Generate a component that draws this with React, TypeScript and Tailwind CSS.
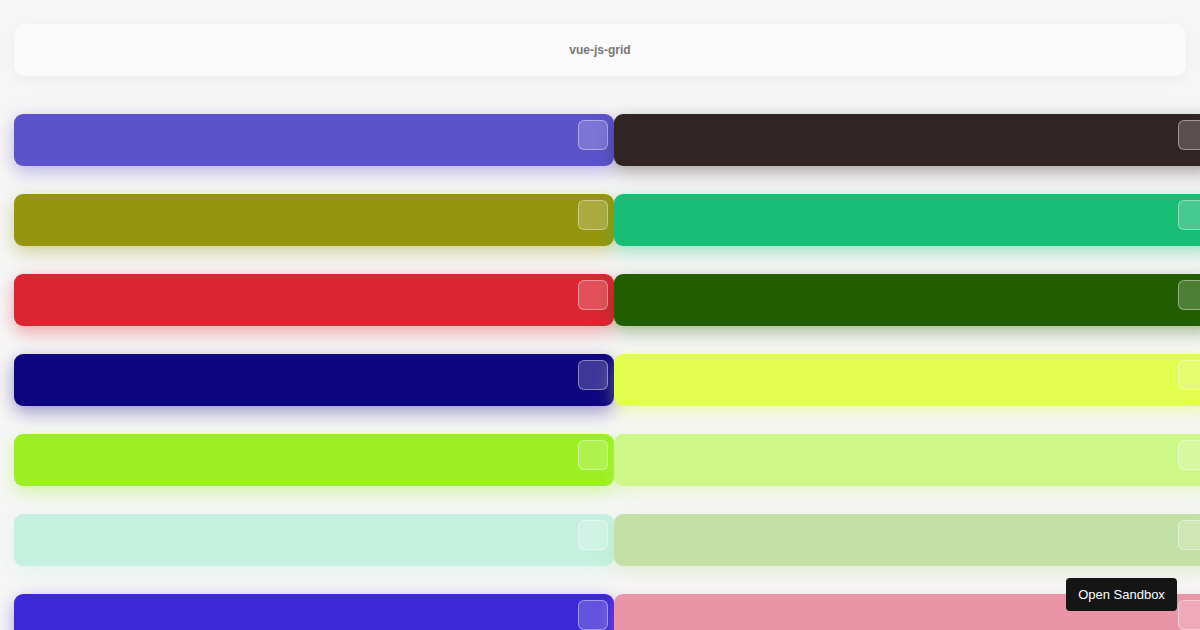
import React from 'react';

const colors = [
  '#5c53cc',
  '#302424',
  '#97950e',
  '#18bd76',
  '#dc2533',
  '#225e00',
  '#0e0580',
  '#e2fd4d',
  '#9bef22',
  '#cdf786',
  '#c5f0e0',
  '#c3e0a6',
  '#3c28d7',
  '#ea95a7',
];

function Cell({ color }: { color: string }) {
  return (
    <div className="h-[80px] w-[600px]">
      <div
        className="relative h-[52px] w-[600px] rounded-[9px]"
        style={{ backgroundColor: color, boxShadow: `0 6px 18px ${color}66` }}
      >
        <div className="absolute right-[6px] top-[6px] h-[30px] w-[30px] rounded-[6px] border border-white/40 bg-white/20" />
      </div>
    </div>
  );
}

export default function App() {
  return (
    <div
      className="relative h-[630px] w-[1200px] overflow-hidden bg-[#f6f6f6]"
      style={{ fontFamily: '"Liberation Sans", Arial, sans-serif' }}
    >
      <div className="px-[14px] pt-[24px]">
        <div className="flex h-[52px] items-center justify-center rounded-[10px] bg-[#fafafa] shadow-[0_4px_14px_rgba(0,0,0,0.04)]">
          <span className="text-[12px] font-bold text-[#777]">vue-js-grid</span>
        </div>
        <div className="mt-[38px] grid w-[1200px] grid-cols-[600px_600px]">
          {colors.map((c, i) => (
            <Cell key={i} color={c} />
          ))}
        </div>
      </div>
      <button className="absolute bottom-[19px] right-[23px] flex h-[33px] w-[111px] items-center justify-center rounded-[4px] bg-[#151515] text-[13px] text-white">
        Open Sandbox
      </button>
    </div>
  );
}
